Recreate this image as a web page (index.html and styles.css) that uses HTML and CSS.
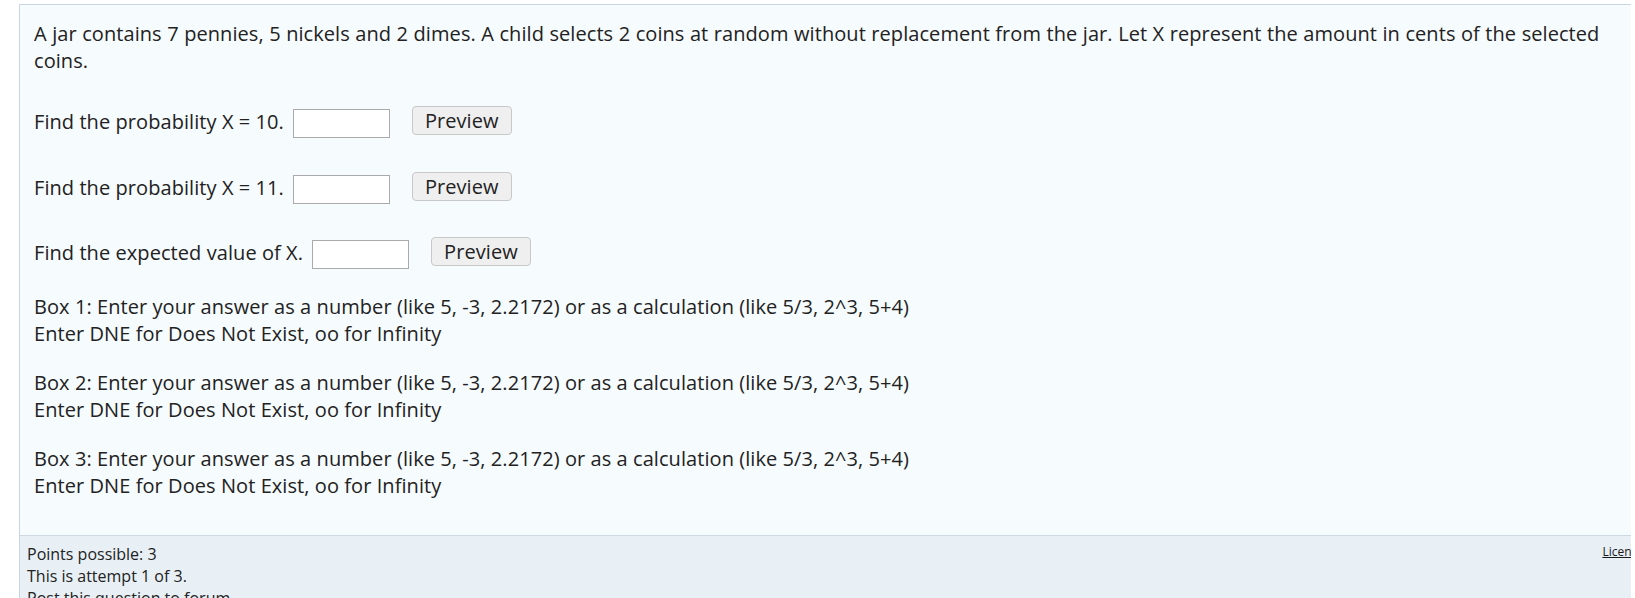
FILE: index.html
```html
<!DOCTYPE html>
<html>
<head>
<meta charset="utf-8">
<link rel="stylesheet" href="styles.css">
</head>
<body>
<div class="viewport">
  <div class="panel">
    <div class="question">
      <p class="intro">A jar contains 7 pennies, 5 nickels and 2 dimes. A child selects 2 coins at random without replacement from the jar. Let X represent the amount in cents of the selected coins.</p>
      <div class="row row1"><span class="label">Find the probability X = 10.</span><input class="answer" type="text"><button class="preview">Preview</button></div>
      <div class="row row2"><span class="label">Find the probability X = 11.</span><input class="answer" type="text"><button class="preview">Preview</button></div>
      <div class="row row3"><span class="label">Find the expected value of X.</span><input class="answer" type="text"><button class="preview">Preview</button></div>
      <p class="hint hint1">Box 1: Enter your answer as a number (like 5, -3, 2.2172) or as a calculation (like 5/3, 2^3, 5+4)<br>Enter DNE for Does Not Exist, oo for Infinity</p>
      <p class="hint">Box 2: Enter your answer as a number (like 5, -3, 2.2172) or as a calculation (like 5/3, 2^3, 5+4)<br>Enter DNE for Does Not Exist, oo for Infinity</p>
      <p class="hint">Box 3: Enter your answer as a number (like 5, -3, 2.2172) or as a calculation (like 5/3, 2^3, 5+4)<br>Enter DNE for Does Not Exist, oo for Infinity</p>
    </div>
    <div class="footer">
      <a class="license" href="#">License</a>
      <div>Points possible: 3</div>
      <div>This is attempt 1 of 3.</div>
      <div>Post this question to forum</div>
    </div>
  </div>
</div>
</body>
</html>
```
FILE: styles.css
```css
html, body {
  margin: 0;
  padding: 0;
  background: #ffffff;
}
body {
  font-family: "Open Sans", "Liberation Sans", sans-serif;
  color: #222222;
}
.viewport {
  width: 1631px;
  box-sizing: border-box;
  padding: 4px 0 0 19px;
  overflow: hidden;
}
.panel {
  width: 1637px;
  box-sizing: border-box;
  border: 1px solid #c7d6e2;
  background: #f6fbfe;
}
.question {
  padding: 15px 14px 36px 14px;
  font-size: 20px;
  line-height: 27px;
  letter-spacing: 0.07px;
}
.intro {
  margin: 0 40px 34px 0;
  word-spacing: 0.2px;
}
.row {
  display: flex;
  align-items: flex-start;
  height: 30px;
  white-space: nowrap;
}
.row2 { margin-top: 36px; }
.row3 { margin-top: 35px; }
.label {
  line-height: 27px;
  margin-right: 9px;
}
.answer {
  box-sizing: border-box;
  width: 97px;
  height: 29px;
  margin: 1px 0 0 0;
  padding: 0 4px;
  border: 1px solid #aaaaaa;
  background: #ffffff;
  font-size: 16px;
  font-family: "Open Sans", sans-serif;
}
.preview {
  box-sizing: border-box;
  height: 29px;
  margin: -2px 0 0 22px;
  padding: 0 12px;
  border: 1px solid #c8c8c8;
  border-radius: 4px;
  background: #efefef;
  color: #222222;
  font-family: "Open Sans", "Liberation Sans", sans-serif;
  font-size: 20px;
  line-height: 27px;
  letter-spacing: 0.07px;
}
.hint {
  margin: 22px 0 0 0;
}
.hint1 {
  margin-top: 24px;
}
.footer {
  border-top: 1px solid #cdd8e0;
  background: #e8f0f6;
  padding: 7px 7px 10px 7px;
  font-size: 16px;
  line-height: 22px;
}
.license {
  float: right;
  font-size: 12px;
  line-height: 16px;
  margin: 1px 4px 0 0;
  color: #1a1a1a;
  text-decoration: underline;
}
```
